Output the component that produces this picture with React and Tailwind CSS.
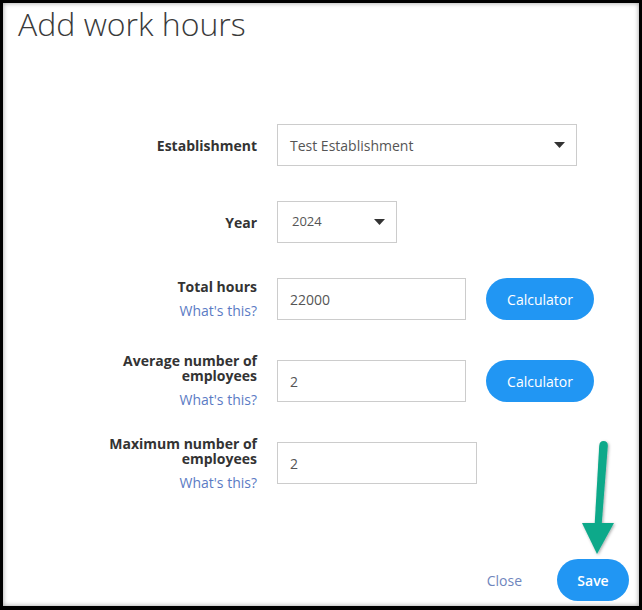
import React from "react";

const font = { fontFamily: '"Open Sans", "Liberation Sans", sans-serif' };

const Caret = () => (
  <svg width="11" height="6" viewBox="0 0 11 6" className="shrink-0">
    <path d="M0 0 L11 0 L5.5 6 Z" fill="#333" />
  </svg>
);

const WhatsThis = () => (
  <a className="mt-[9px] block text-[14px] leading-[15px] text-[#5b7bc4]" href="#">
    What's this?
  </a>
);

const CalcButton = () => (
  <button
    type="button"
    className="ml-5 h-[42px] w-[108px] rounded-full bg-[#2196f3] text-[14px] text-white"
  >
    Calculator
  </button>
);

// green annotation arrow pointing at Save
const Arrow = () => (
  <svg
    width="50"
    height="130"
    viewBox="0 0 50 130"
    className="pointer-events-none absolute left-[572px] top-[432px]"
  >
    <defs>
      <filter id="sh" x="-50%" y="-20%" width="200%" height="140%">
        <feDropShadow dx="1" dy="1" stdDeviation="1.5" floodColor="#000" floodOpacity="0.35" />
      </filter>
    </defs>
    <g filter="url(#sh)" fill="#0ea98a">
      <path d="M28.5 6 Q33 6 32.8 11 L26.5 92 L19.5 92 L24.2 11 Q24.5 6 28.5 6 Z" />
      <path d="M7 88 L39 88 L22 119 Z" />
    </g>
  </svg>
);

export default function App() {
  return (
    <div
      style={font}
      className="relative h-[610px] w-[642px] overflow-hidden border-[3px] border-b-4 border-black bg-white text-[#333] shadow-[inset_0_0_5px_rgba(0,0,0,0.4)]"
    >
      <h1 className="ml-[15px] mt-[1px] text-[32px] font-light leading-[40px] text-[#3a3a3a]">
        Add work hours
      </h1>

      <form className="mt-[80px] flex flex-col">
        {/* Establishment */}
        <div className="flex items-center">
          <div className="w-[254px] text-right text-[14px] font-bold leading-[15px]">
            Establishment
          </div>
          <div className="ml-5 flex h-[42px] w-[300px] items-center justify-between border border-[#ccc] pl-3 pr-[11px] text-[14px] text-[#555]">
            <span>Test Establishment</span>
            <Caret />
          </div>
        </div>

        {/* Year */}
        <div className="mt-[35px] flex items-center">
          <div className="w-[254px] text-right text-[14px] font-bold leading-[15px]">Year</div>
          <div className="ml-5 flex h-[42px] w-[120px] items-center justify-between border border-[#ccc] pl-[14px] pr-[11px] text-[13px] text-[#555]">
            <span>2024</span>
            <Caret />
          </div>
        </div>

        {/* Total hours */}
        <div className="mt-[35px] flex h-[42px] items-start">
          <div className="mt-[1px] w-[254px] text-right">
            <div className="text-[14px] font-bold leading-[15px]">Total hours</div>
            <WhatsThis />
          </div>
          <div className="ml-5 flex h-[42px] w-[189px] items-center border border-[#ccc] px-3 text-[14px] text-[#555]">
            22000
          </div>
          <CalcButton />
        </div>

        {/* Average number of employees */}
        <div className="mt-[40px] flex h-[42px] items-start">
          <div className="mt-[-6px] w-[254px] pl-[100px] text-right">
            <div className="text-[14px] font-bold leading-[14.5px]">Average number of employees</div>
            <WhatsThis />
          </div>
          <div className="ml-5 flex h-[42px] w-[189px] items-center border border-[#ccc] px-3 text-[14px] text-[#555]">
            2
          </div>
          <CalcButton />
        </div>

        {/* Maximum number of employees */}
        <div className="mt-[40px] flex h-[42px] items-start">
          <div className="mt-[-5px] w-[254px] pl-[100px] text-right">
            <div className="text-[14px] font-bold leading-[14.5px]">Maximum number of employees</div>
            <WhatsThis />
          </div>
          <div className="ml-5 flex h-[42px] w-[200px] items-center border border-[#ccc] px-3 text-[14px] text-[#555]">
            2
          </div>
        </div>

        {/* Footer */}
        <div className="mt-[75px] flex items-center justify-end pr-[10px]">
          <button type="button" className="text-[14px] text-[#6f86bd]">
            Close
          </button>
          <button
            type="button"
            className="ml-[35px] h-[42px] w-[72px] rounded-full bg-[#2196f3] text-[14px] font-semibold text-white"
          >
            Save
          </button>
        </div>
      </form>

      <Arrow />
    </div>
  );
}
